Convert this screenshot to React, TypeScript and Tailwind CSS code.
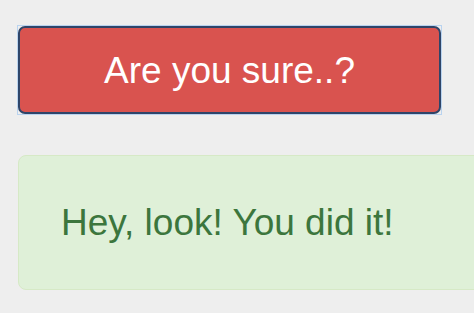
import React from 'react';

const App: React.FC = () => {
  return (
    <div className="w-screen h-screen overflow-hidden bg-[#eeeeee] pl-[17px] pt-[25px] font-['Liberation_Sans',Arial,sans-serif]">
      {/* focus ring around the confirm button */}
      <div className="w-[425px] h-[90px] border border-[#b9d3ef]">
        <button className="w-full h-full rounded-[7px] border-2 border-[#2e4569] bg-[#d9534f] text-white text-[37px] leading-none flex items-center justify-center">
          Are you sure..?
        </button>
      </div>

      <div className="mt-[40px] ml-px w-[500px] h-[135px] flex-none rounded-[8px] border border-[#d6e9c6] bg-[#dff0d8] pl-[42px] flex items-center">
        <span className="text-[37px] leading-none text-[#3c763d]">Hey, look! You did it!</span>
      </div>
    </div>
  );
};

export default App;
